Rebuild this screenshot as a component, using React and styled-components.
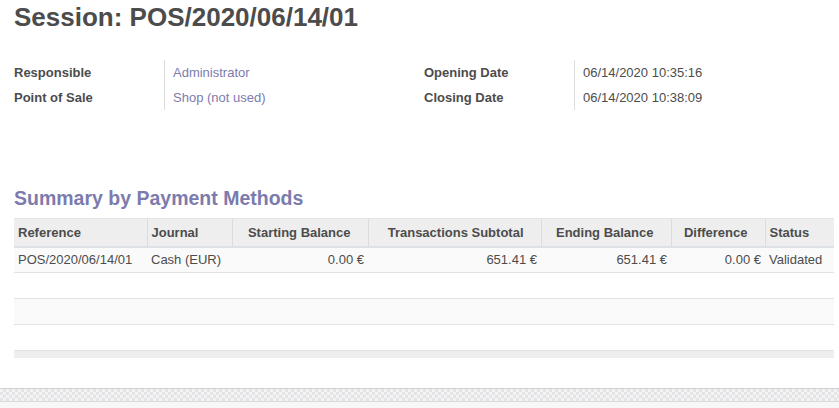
import React from "react";
import styled, { createGlobalStyle } from "styled-components";

const Global = createGlobalStyle`
  html, body { margin: 0; padding: 0; background: #fff; }
  body { font-family: "Liberation Sans", Arial, sans-serif; font-size: 13px; color: #4c4c4c; }
  * { box-sizing: border-box; }
`;

const Page = styled.div`
  width: 839px;
  height: 408px;
  display: flex;
  flex-direction: column;
  overflow: hidden;
`;

const Sheet = styled.div`
  height: 389px;
  flex: none;
  background: #fff;
  border-bottom: 1px solid #cfcfd6;
  padding: 0 5px 0 14px;
  display: flex;
  flex-direction: column;
`;

const Title = styled.h1`
  margin: 0;
  padding-top: 2px;
  font-size: 26px;
  line-height: 31px;
  font-weight: bold;
  color: #4c4c4c;
`;

const Groups = styled.div`
  display: grid;
  grid-template-columns: 410px 410px;
  margin-top: 27px;
`;

const Group = styled.div`
  display: grid;
  grid-template-columns: 150px 1fr;
  grid-auto-rows: 25px;
`;

const Label = styled.div`
  font-weight: bold;
  color: #4c4c4c;
  line-height: 25px;
`;

const Value = styled.div`
  border-left: 1px solid #dcdcdc;
  padding-left: 8px;
  line-height: 25px;
  color: ${(p) => (p.$link ? "#7c7bad" : "#4c4c4c")};
`;

const Heading = styled.h2`
  margin: 76px 0 0 0;
  font-size: 19.5px;
  line-height: 24px;
  font-weight: bold;
  color: #7c7bad;
`;

const Table = styled.table`
  margin-top: 8px;
  width: 820px;
  border-collapse: collapse;
  table-layout: fixed;
`;

const Th = styled.th`
  background: #eeeeee;
  border-top: 1px solid #e4e4e4;
  border-bottom: 2px solid #dee2e6;
  border-left: ${(p) => (p.$first ? "none" : "1px solid #dcdcdc")};
  height: 28px;
  padding: 0 ${(p) => (p.$num ? "17px" : "4px")} 0 4px;
  text-align: ${(p) => (p.$num ? "right" : "left")};
  font-weight: bold;
  color: #4c4c4c;
  white-space: nowrap;
`;

const Tr = styled.tr`
  background: ${(p) => (p.$striped ? "#fafafa" : "#fff")};
`;

const Td = styled.td`
  height: 26px;
  padding: 0 4px;
  border-bottom: 1px solid #e2e2e6;
  text-align: ${(p) => (p.$num ? "right" : "left")};
  color: #4c4c4c;
  white-space: nowrap;
`;

const FootCell = styled.td`
  height: 7px;
  padding: 0;
  background: #eeeeee;
`;

const Texture = styled.div`
  height: 12px;
  flex: none;
  background: repeating-conic-gradient(#e4e4e6 0 25%, #f3f3f4 0 50%) 0 0 / 6px 6px;
`;

const Bottom = styled.div`
  flex: 1;
  border-top: 1px solid #dadade;
  background: #f7f7f7;
`;

const cols = [
  { w: 133, t: "Reference" },
  { w: 85, t: "Journal" },
  { w: 136, t: "Starting Balance", num: true },
  { w: 173, t: "Transactions Subtotal", num: true },
  { w: 130, t: "Ending Balance", num: true },
  { w: 94, t: "Difference", num: true },
  { w: 69, t: "Status" },
];

const row = ["POS/2020/06/14/01", "Cash (EUR)", "0.00 €", "651.41 €", "651.41 €", "0.00 €", "Validated"];

export default function App() {
  return (
    <Page>
      <Global />
      <Sheet>
        <Title>Session: POS/2020/06/14/01</Title>
        <Groups>
          <Group>
            <Label>Responsible</Label>
            <Value $link>Administrator</Value>
            <Label>Point of Sale</Label>
            <Value $link>Shop (not used)</Value>
          </Group>
          <Group>
            <Label>Opening Date</Label>
            <Value>06/14/2020 10:35:16</Value>
            <Label>Closing Date</Label>
            <Value>06/14/2020 10:38:09</Value>
          </Group>
        </Groups>
        <Heading>Summary by Payment Methods</Heading>
        <Table>
          <colgroup>
            {cols.map((c) => (
              <col key={c.t} style={{ width: c.w }} />
            ))}
          </colgroup>
          <thead>
            <tr>
              {cols.map((c, i) => (
                <Th key={c.t} $num={c.num} $first={i === 0}>
                  {c.t}
                </Th>
              ))}
            </tr>
          </thead>
          <tbody>
            <Tr $striped>
              {row.map((v, i) => (
                <Td key={i} $num={cols[i].num}>
                  {v}
                </Td>
              ))}
            </Tr>
            {[false, true, false].map((s, r) => (
              <Tr key={r} $striped={s}>
                {cols.map((c) => (
                  <Td key={c.t} />
                ))}
              </Tr>
            ))}
          </tbody>
          <tfoot>
            <tr>
              <FootCell colSpan={7} />
            </tr>
          </tfoot>
        </Table>
      </Sheet>
      <Texture />
      <Bottom />
    </Page>
  );
}
